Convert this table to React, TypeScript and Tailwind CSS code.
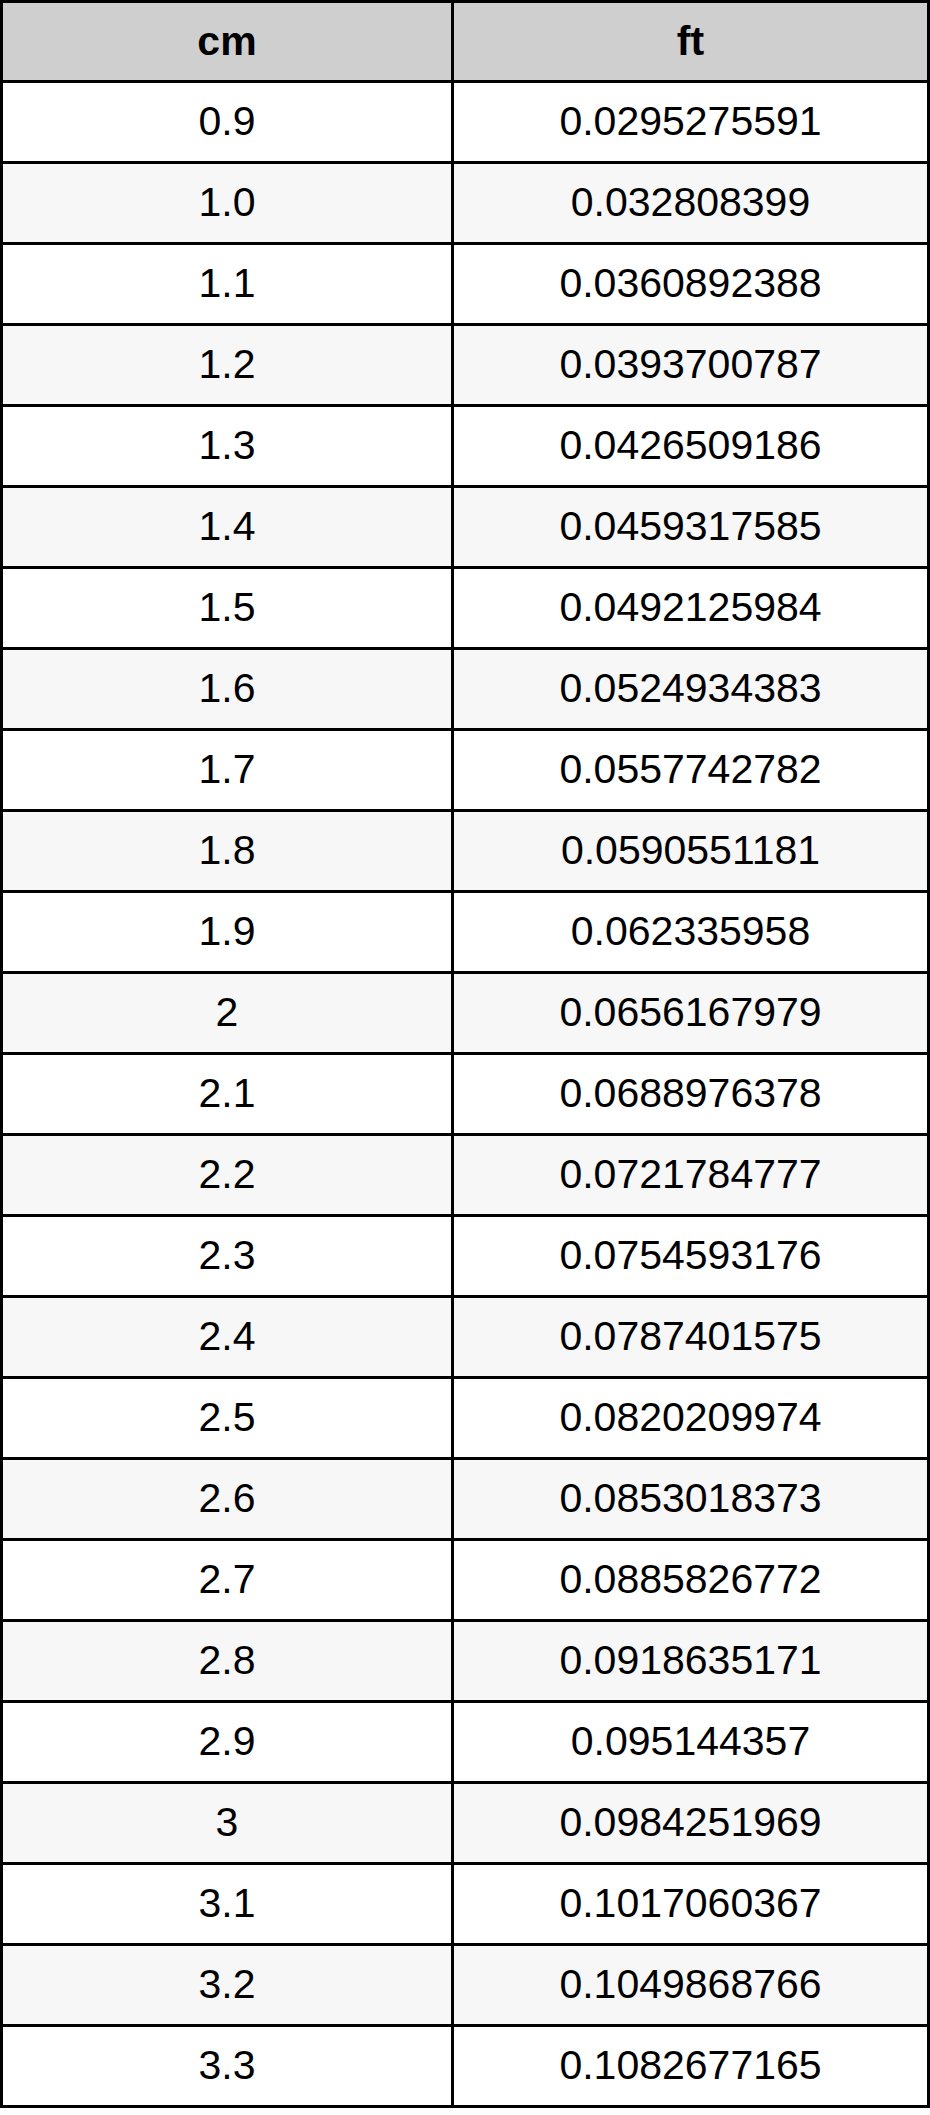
const rows: [string, string][] = [
  ["0.9", "0.0295275591"],
  ["1.0", "0.032808399"],
  ["1.1", "0.0360892388"],
  ["1.2", "0.0393700787"],
  ["1.3", "0.0426509186"],
  ["1.4", "0.0459317585"],
  ["1.5", "0.0492125984"],
  ["1.6", "0.0524934383"],
  ["1.7", "0.0557742782"],
  ["1.8", "0.0590551181"],
  ["1.9", "0.062335958"],
  ["2", "0.0656167979"],
  ["2.1", "0.0688976378"],
  ["2.2", "0.0721784777"],
  ["2.3", "0.0754593176"],
  ["2.4", "0.0787401575"],
  ["2.5", "0.0820209974"],
  ["2.6", "0.0853018373"],
  ["2.7", "0.0885826772"],
  ["2.8", "0.0918635171"],
  ["2.9", "0.095144357"],
  ["3", "0.0984251969"],
  ["3.1", "0.1017060367"],
  ["3.2", "0.1049868766"],
  ["3.3", "0.1082677165"],
];

const font = { fontFamily: "'Liberation Sans', Arial, sans-serif" };

export default function App() {
  return (
    <div className="w-[930px] bg-white text-black" style={font}>
      <div className="flex flex-col border-[3px] border-black">
        {/* header */}
        <div className="grid h-[77px] grid-cols-[448px_1fr] bg-[#cfcfcf] text-[41px] font-bold">
          <div className="flex items-center justify-center">cm</div>
          <div className="flex items-center justify-center border-l-[3px] border-black">ft</div>
        </div>
        {rows.map(([cm, ft], i) => (
          <div
            key={cm}
            className={`grid h-[81px] grid-cols-[448px_1fr] border-t-[3px] border-black text-[41px] ${
              i % 2 === 1 ? "bg-[#f7f7f7]" : "bg-white"
            }`}
          >
            <div className="flex items-center justify-center">{cm}</div>
            <div className="flex items-center justify-center border-l-[3px] border-black">{ft}</div>
          </div>
        ))}
      </div>
    </div>
  );
}
